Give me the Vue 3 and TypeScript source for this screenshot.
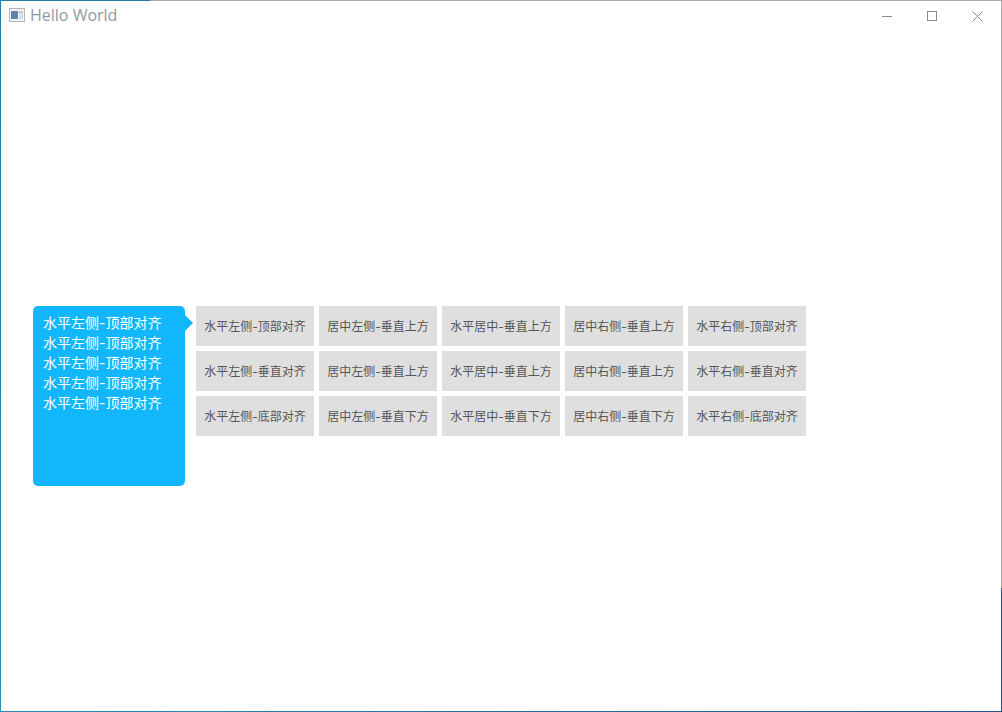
<script setup lang="ts">
const rows: string[][] = [
  ['水平左侧-顶部对齐', '居中左侧-垂直上方', '水平居中-垂直上方', '居中右侧-垂直上方', '水平右侧-顶部对齐'],
  ['水平左侧-垂直对齐', '居中左侧-垂直上方', '水平居中-垂直上方', '居中右侧-垂直上方', '水平右侧-垂直对齐'],
  ['水平左侧-底部对齐', '居中左侧-垂直下方', '水平居中-垂直下方', '居中右侧-垂直下方', '水平右侧-底部对齐'],
]
const lines: string[] = Array(5).fill('水平左侧-顶部对齐')
</script>

<template>
  <div class="window">
    <header class="titlebar">
      <svg class="app-icon" width="16" height="14" viewBox="0 0 16 14">
        <rect x="0.5" y="0.5" width="15" height="13" fill="#f2f2f2" stroke="#b4b4b4" />
        <rect x="2" y="3" width="7" height="8" fill="#5f82ad" />
        <rect x="10" y="3" width="4" height="3" fill="#c4ccd6" />
        <rect x="10" y="7" width="4" height="4" fill="#d8dce2" />
      </svg>
      <span class="title">Hello World</span>
      <div class="controls">
        <svg width="11" height="11" viewBox="0 0 11 11"><path d="M0 5.5H10" stroke="#8c8c8c" fill="none" /></svg>
        <svg width="11" height="11" viewBox="0 0 11 11"><rect x="0.5" y="0.5" width="9" height="9" stroke="#8c8c8c" fill="none" /></svg>
        <svg width="11" height="11" viewBox="0 0 11 11"><path d="M0.5 0.5L10.5 10.5M10.5 0.5L0.5 10.5" stroke="#8c8c8c" fill="none" /></svg>
      </div>
    </header>
    <main class="content">
      <div class="tip">
        <div v-for="(line, i) in lines" :key="i">{{ line }}</div>
        <span class="arrow"></span>
      </div>
      <div class="grid">
        <template v-for="(row, r) in rows" :key="r">
          <button v-for="(label, c) in row" :key="c" class="cell">{{ label }}</button>
        </template>
      </div>
    </main>
  </div>
</template>

<style scoped>
.window {
  box-sizing: border-box;
  width: 1002px;
  height: 712px;
  padding: 1px;
  display: flex;
  flex-direction: column;
  background:
    linear-gradient(90deg, #1f7fa8 0 150px, #a9a9a9 150px 100%) top / 100% 1px no-repeat,
    linear-gradient(180deg, #a9a9a9 0 588px, #25568f 588px 100%) right / 1px 100% no-repeat,
    linear-gradient(90deg, #2390b0, #25568f) bottom / 100% 1px no-repeat,
    linear-gradient(180deg, #1f7fa8, #2390b0) left / 1px 100% no-repeat,
    #fff;
}
.titlebar {
  height: 28px;
  margin-bottom: 1px;
  flex: none;
  display: flex;
  align-items: center;
  padding-left: 8px;
}
.app-icon {
  margin-right: 5px;
}
.title {
  font: 16px "Open Sans", "Liberation Sans", sans-serif;
  color: #8f9aa3;
}
.controls {
  margin-left: auto;
  margin-right: 18px;
  display: flex;
  gap: 34px;
  padding-top: 2px;
}
.content {
  flex: 1;
  display: flex;
  align-items: flex-start;
  gap: 11px;
  padding: 276px 0 0 32px;
}
.tip {
  position: relative;
  box-sizing: border-box;
  width: 152px;
  height: 180px;
  padding: 7px 10px;
  background: #12b7fb;
  border-radius: 5px;
  color: #fff;
  font: 14px/20px Inter, "Noto Sans CJK SC", sans-serif;
  white-space: nowrap;
}
.arrow {
  position: absolute;
  top: 9px;
  right: -8px;
  width: 0;
  height: 0;
  border-style: solid;
  border-width: 8px 0 8px 8px;
  border-color: transparent transparent transparent #12b7fb;
}
.grid {
  display: grid;
  grid-template-columns: repeat(5, 118px);
  grid-auto-rows: 40px;
  gap: 5px;
}
.cell {
  border: 0;
  padding: 0 0 2px;
  background: #dfdfdf;
  color: #555;
  font: 12px Inter, "Noto Sans CJK SC", serif;
  white-space: nowrap;
}
</style>

<style>
html, body {
  margin: 0;
  background: #fff;
}
</style>
